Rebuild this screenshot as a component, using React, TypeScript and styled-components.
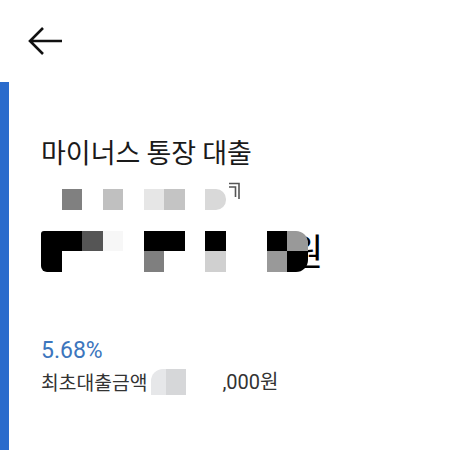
import React from "react";
import styled, { createGlobalStyle } from "styled-components";

const Global = createGlobalStyle`
  html, body { margin: 0; padding: 0; background: #ffffff; }
  body { font-family: Roboto, "Noto Sans CJK KR", sans-serif; }
`;

const Page = styled.div`
  width: 474px;
  height: 455px;
  background: #ffffff;
  overflow: hidden;
`;

const Header = styled.header`
  height: 82px;
  display: flex;
  align-items: center;
  padding-left: 27px;
  box-sizing: border-box;
`;

const BackButton = styled.button`
  border: none;
  background: none;
  padding: 0;
  width: 36px;
  height: 36px;
  display: flex;
  align-items: center;
  justify-content: center;
  cursor: pointer;
`;

const Card = styled.section`
  display: flex;
  height: 368px;
`;

const Bar = styled.div`
  width: 9px;
  flex: none;
  background: #2a6bcc;
`;

const Content = styled.div`
  flex: 1;
  padding: 54px 0 0 32px;
  box-sizing: border-box;
`;

const Title = styled.h1`
  margin: 0;
  font-family: "Noto Sans CJK KR", sans-serif;
  font-weight: 400;
  font-size: 27px;
  line-height: 32px;
  color: #1a1a1a;
`;

const MosaicRow = styled.div<{ $top: number }>`
  display: flex;
  align-items: flex-start;
  margin-top: ${(p) => p.$top}px;
  position: relative;
`;

const CellGrid = styled.div`
  display: grid;
  grid-auto-flow: column;
  grid-template-rows: repeat(var(--rows), 20.5px);
  grid-auto-columns: 20.5px;
  position: relative;
  z-index: 1;
`;

const Cell = styled.div<{ $c: string; $r?: string }>`
  background: ${(p) => p.$c};
  border-radius: ${(p) => p.$r || "0"};
`;

const Hook = styled.svg`
  margin-left: 2px;
  margin-top: -7px;
`;

const Won = styled.span`
  font-family: "Noto Sans CJK KR", sans-serif;
  font-size: 37px;
  line-height: 41px;
  color: #000;
  margin-left: -18px;
  margin-top: -1px;
  position: relative;
  z-index: 0;
`;

const Rate = styled.div`
  margin-top: 66px;
  font-family: Roboto, "Noto Sans CJK KR", sans-serif;
  font-size: 23px;
  line-height: 26px;
  color: #3c76bd;
`;

const AmountLine = styled.div`
  margin-top: 5px;
  display: flex;
  align-items: flex-start;
  font-family: "Noto Sans CJK KR", Roboto, sans-serif;
  font-size: 19.3px;
  line-height: 26px;
  color: #333333;
`;

const Blur = styled.div<{ $c: string; $w: number; $r?: string }>`
  width: ${(p) => p.$w}px;
  height: 26px;
  background: ${(p) => p.$c};
  border-radius: ${(p) => p.$r || "0"};
`;

const Gap = styled.div<{ $w: number }>`
  width: ${(p) => p.$w}px;
`;

const Amount = styled.span`
  font-family: Roboto, "Noto Sans CJK KR", sans-serif;
  font-size: 20px;
`;

type C = [string, string?];

const row1: C[] = [
  ["transparent"], ["#808080"], ["transparent"], ["#c0c0c0"], ["transparent"],
  ["#e6e6e6"], ["#c4c4c4"], ["transparent"], ["#d9d9d9", "0 10px 10px 0"],
];

const row2: C[][] = [
  [["#000", "3px 0 0 0"], ["#000", "0 0 0 6px"]],
  [["#000"], ["transparent"]],
  [["#555"], ["transparent"]],
  [["#f7f7f7"], ["transparent"]],
  [["transparent"], ["transparent"]],
  [["#000"], ["#7f7f7f"]],
  [["#000"], ["transparent"]],
  [["transparent"], ["transparent"]],
  [["#000"], ["#d0d0d0"]],
  [["transparent"], ["transparent"]],
  [["transparent"], ["transparent"]],
  [["#000"], ["#999"]],
  [["#999", "0 12px 0 0"], ["#000", "0 0 12px 0"]],
];

export default function App() {
  return (
    <Page>
      <Global />
      <Header>
        <BackButton aria-label="뒤로">
          <svg width="36" height="36" viewBox="0 0 36 36" fill="none">
            <path
              d="M16 5 L3 18 L16 31 M3 18 H35"
              stroke="#111"
              strokeWidth="2.6"
              strokeLinecap="butt"
              strokeLinejoin="miter"
            />
          </svg>
        </BackButton>
      </Header>
      <Card>
        <Bar />
        <Content>
          <Title>마이너스 통장 대출</Title>
          <MosaicRow $top={21}>
            <CellGrid style={{ ["--rows" as string]: 1 } as React.CSSProperties}>
              {row1.map(([c, r], i) => (
                <Cell key={i} $c={c} $r={r} />
              ))}
            </CellGrid>
            <Hook width="14" height="18" viewBox="0 0 14 18">
              <path d="M1 1.5 H11 V17 M1 5 H7.5 V15" stroke="#555" strokeWidth="1.6" fill="none" />
            </Hook>
          </MosaicRow>
          <MosaicRow $top={21}>
            <CellGrid style={{ ["--rows" as string]: 2 } as React.CSSProperties}>
              {row2.map((col, i) =>
                col.map(([c, r], j) => <Cell key={`${i}-${j}`} $c={c} $r={r} />)
              )}
            </CellGrid>
            <Won>원</Won>
          </MosaicRow>
          <Rate>5.68%</Rate>
          <AmountLine>
            최초대출금액
            <Gap $w={4} />
            <Blur $c="#e6e7e9" $w={15} $r="12px 0 0 0" />
            <Blur $c="#d6d7d9" $w={20} />
            <Gap $w={36} />
            <Amount>,000원</Amount>
          </AmountLine>
        </Content>
      </Card>
    </Page>
  );
}
